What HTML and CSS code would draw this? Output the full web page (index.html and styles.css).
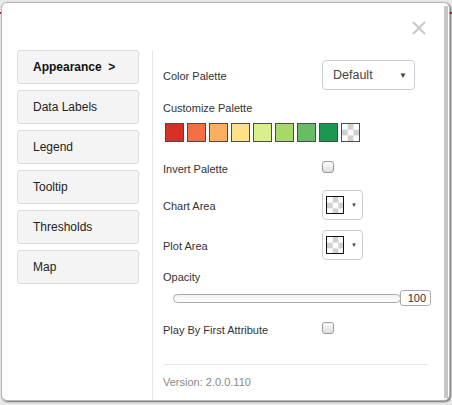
FILE: index.html
```html
<!DOCTYPE html>
<html lang="en">

<head>
  <meta name="viewport" content="width=device-width, initial-scale=1.0">
  <link rel="stylesheet" href="styles.css">
</head>

<body>

  <div class="dialog">
    <div class="dialog-main">

      <div class="dialog-header">
        <span class="close-btn">
          <svg width="14" height="14" viewBox="0 0 14 14">
            <path d="M1 1 L13 13 M13 1 L1 13" stroke="#c8c8c8" stroke-width="2" fill="none" />
          </svg>
        </span>
      </div>

      <div class="dialog-body">
        <ul class="nav">
          <li class="nav-item active">Appearance&nbsp;&nbsp;&gt;</li>
          <li class="nav-item">Data Labels</li>
          <li class="nav-item">Legend</li>
          <li class="nav-item">Tooltip</li>
          <li class="nav-item">Thresholds</li>
          <li class="nav-item">Map</li>
        </ul>

        <div class="pane">
          <div class="row row-control row-first">
            <span class="label">Color Palette</span>
            <div class="select">Default<span class="caret">&#9660;</span></div>
          </div>

          <div class="row row-text row-customize">
            <span class="label">Customize Palette</span>
          </div>

          <div class="swatches" id="swatches"></div>

          <div class="row row-check row-invert">
            <span class="label">Invert Palette</span>
            <span class="checkbox"></span>
          </div>

          <div class="row row-control row-chart">
            <span class="label">Chart Area</span>
            <div class="picker"><span class="chip transparent"></span><span class="caret small">&#9660;</span></div>
          </div>

          <div class="row row-control row-plot">
            <span class="label">Plot Area</span>
            <div class="picker"><span class="chip transparent"></span><span class="caret small">&#9660;</span></div>
          </div>

          <div class="row row-text row-opacity">
            <span class="label">Opacity</span>
          </div>

          <div class="slider-row">
            <div class="slider-track"></div>
            <div class="slider-value">100</div>
          </div>

          <div class="row row-check row-play">
            <span class="label">Play By First Attribute</span>
            <span class="checkbox"></span>
          </div>

          <div class="divider"></div>

          <div class="version">Version: 2.0.0.110</div>
        </div>
      </div>

    </div>
    <div class="scrollbar"></div>
  </div>

  <script>
    const palette = ['#d73027', '#f46d43', '#fdae61', '#fee08b', '#d9ef8b', '#a6d96a', '#66bd63', '#1a9850', ''];
    const swatches = document.getElementById('swatches');

    palette.forEach(color => {
      const sw = document.createElement('span');
      sw.className = 'swatch' + (color ? '' : ' transparent');
      if (color) sw.style.background = color;
      swatches.appendChild(sw);
    });
  </script>

</body>

</html>
```

FILE: styles.css
```css
html,
body {
  margin: 0;
  padding: 0;
}

body {
  width: 452px;
  height: 405px;
  box-sizing: border-box;
  padding: 2px 0 0 1px;
  font-family: "Liberation Sans", Arial, sans-serif;
  color: #333;
  overflow: hidden;
  background: linear-gradient(#e9e9e9 0, #e9e9e9 12px, #c1272d 12px, #c1272d 14px, #e9e9e9 14px);
}

.dialog {
  width: 449px;
  height: 399px;
  box-sizing: border-box;
  background: #fff;
  border: 1px solid #b4b4b4;
  border-radius: 6px;
  box-shadow: 1px 1px 2px rgba(0, 0, 0, 0.55);
  display: flex;
}

.dialog-main {
  flex: 1;
  display: flex;
  flex-direction: column;
}

/* fake scrollbar on the right */
.scrollbar {
  width: 4px;
  margin: 3px 1px 2px 0;
  background: #c6c6c6;
}

.dialog-header {
  height: 47px;
  box-sizing: border-box;
  padding: 18px 18px 0 0;
  display: flex;
  justify-content: flex-end;
}

.close-btn {
  width: 14px;
  height: 14px;
  display: block;
}

.close-btn svg {
  display: block;
}

.dialog-body {
  flex: 1;
  display: flex;
}

/* Left nav */
.nav {
  list-style: none;
  margin: 0;
  padding: 0 0 0 15px;
  width: 150px;
  box-sizing: border-box;
  display: flex;
  flex-direction: column;
  gap: 6px;
}

.nav-item {
  width: 122px;
  height: 34px;
  box-sizing: border-box;
  background: #f4f4f4;
  border: 1px solid #dcdcdc;
  border-radius: 3px;
  display: flex;
  align-items: center;
  padding-left: 15px;
  font-size: 12px;
  color: #222;
}

.nav-item.active {
  font-weight: bold;
  color: #111;
}

/* Right pane */
.pane {
  flex: 1;
  border-left: 1px solid #e6e6e6;
  padding: 0 16px 0 10px;
  font-size: 11px;
}

.row {
  display: flex;
}

.label {
  width: 159px;
  flex-shrink: 0;
}

.row-control {
  height: 30px;
  align-items: center;
}

.row-control .label {
  padding-top: 1px;
}

.row-text {
  height: 16px;
  align-items: center;
}

.row-check {
  height: 18px;
  align-items: flex-start;
  line-height: 18px;
}

.row-first {
  margin-top: 10px;
}

.row-customize {
  margin-top: 10px;
}

.row-invert {
  margin-top: 18px;
}

.row-chart {
  margin-top: 12px;
}

.row-plot {
  margin-top: 10px;
}

.row-opacity {
  margin-top: 9px;
}

.row-play {
  margin-top: 15px;
}

.select {
  width: 93px;
  height: 30px;
  box-sizing: border-box;
  border: 1px solid #cccccc;
  border-radius: 4px;
  display: flex;
  align-items: center;
  justify-content: space-between;
  padding: 0 7px 0 10px;
  font-size: 12.5px;
  color: #444;
}

.caret {
  font-size: 8px;
  color: #444;
}

.caret.small {
  font-size: 6px;
}

.picker {
  width: 41px;
  height: 30px;
  box-sizing: border-box;
  border: 1px solid #cccccc;
  border-radius: 4px;
  display: flex;
  align-items: center;
  gap: 7px;
  padding-left: 3px;
}

.chip {
  width: 18px;
  height: 18px;
  box-sizing: border-box;
  border: 1px solid #111;
  display: block;
}

.transparent {
  background: repeating-conic-gradient(#d0d0d0 0 25%, #ffffff 0 50%);
  background-size: 11.4px 11.4px;
}

.swatches {
  display: flex;
  gap: 3px;
  margin: 7px 0 0 2px;
}

.swatch {
  width: 19px;
  height: 19px;
  box-sizing: border-box;
  border: 1px solid #4a4a4a;
  display: block;
}

.checkbox {
  width: 12px;
  height: 12px;
  margin-top: 1px;
  box-sizing: border-box;
  border: 1px solid #9a9a9a;
  border-radius: 3px;
  background: linear-gradient(#fdfdfd, #dcdcdc);
  display: block;
}

/* Opacity slider */
.slider-row {
  display: flex;
  align-items: center;
  height: 16px;
  margin: 5px -3px 0 10px;
}

.slider-track {
  flex: 1;
  height: 9px;
  box-sizing: border-box;
  border: 1px solid #aaaaaa;
  border-radius: 5px;
  background: linear-gradient(#f2f2f2, #ffffff);
  margin-right: -1px;
}

.slider-value {
  width: 31px;
  height: 16px;
  box-sizing: border-box;
  border: 1px solid #aaaaaa;
  border-radius: 3px;
  background: #fff;
  font-size: 11px;
  line-height: 14px;
  text-align: right;
  padding-right: 4px;
}

.divider {
  margin-top: 25px;
  border-top: 1px solid #e8e8e8;
}

.version {
  margin-top: 9px;
  height: 16px;
  line-height: 16px;
  color: #888;
}
```
